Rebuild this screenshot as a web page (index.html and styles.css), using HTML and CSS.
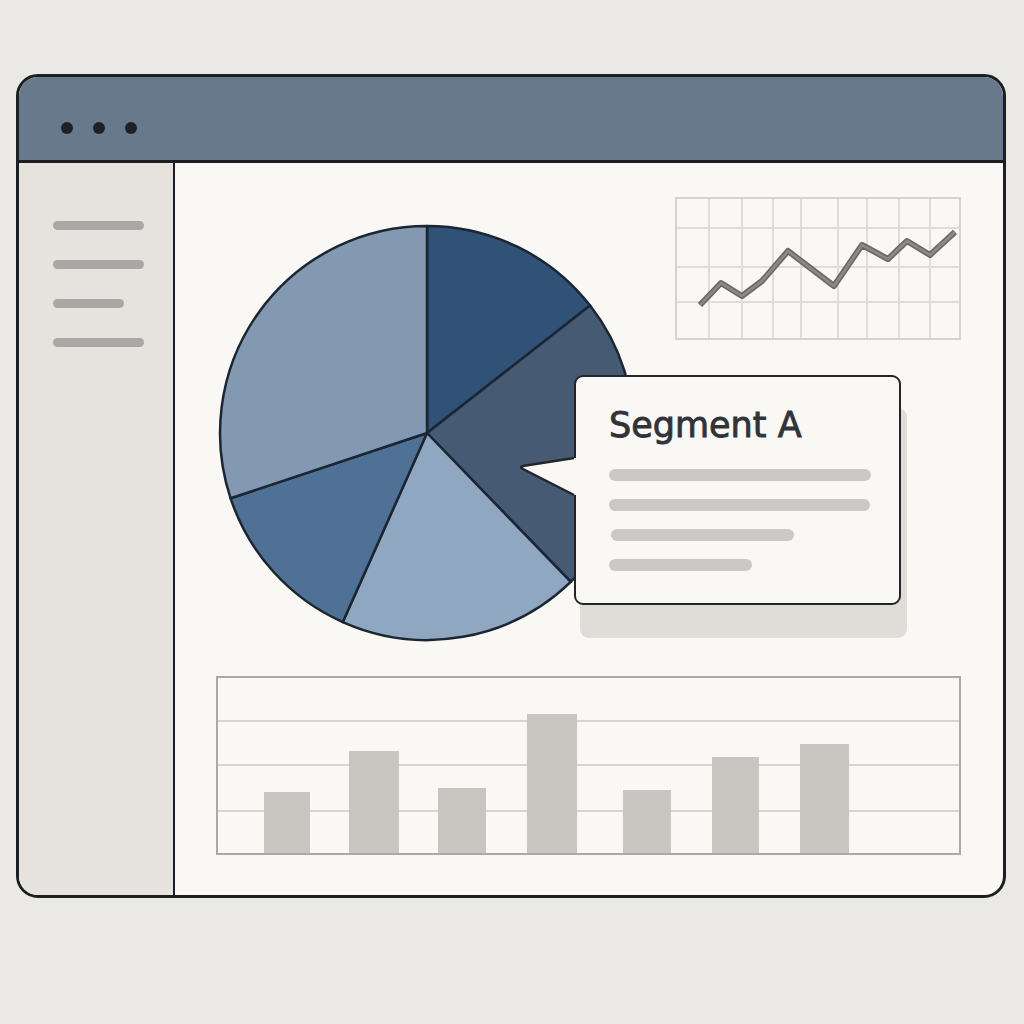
FILE: index.html
```html
<!DOCTYPE html>
<html lang="en">
<head>
  <meta charset="UTF-8" />
  <title>Dashboard</title>
  <link rel="stylesheet" href="styles.css">
</head>
<body>

  <div class="window">
    <div class="titlebar">
      <span class="dot"></span>
      <span class="dot"></span>
      <span class="dot"></span>
    </div>

    <div class="window-body">
      <aside class="sidebar">
        <div class="side-line"></div>
        <div class="side-line"></div>
        <div class="side-line short"></div>
        <div class="side-line"></div>
      </aside>

      <main class="main">
        <div class="top-row">
          <svg class="pie" width="424" height="424" viewBox="0 0 424 424">
            <g stroke="#1b2633" stroke-width="2.5" stroke-linejoin="round">
              <path d="M212 212 L212 5 A207 207 0 0 1 375.1 84.6 Z" fill="#2f5276" />
              <path d="M212 212 L375.1 84.6 A207 207 0 0 1 355.8 360.9 Z" fill="#475a74" />
              <path d="M212 212 L355.8 360.9 A207 207 0 0 1 127.8 401.1 Z" fill="#8fa7c0" />
              <path d="M212 212 L127.8 401.1 A207 207 0 0 1 15.6 277.3 Z" fill="#4f7196" />
              <path d="M212 212 L15.6 277.3 A207 207 0 0 1 212 5 Z" fill="#8399b2" />
            </g>
          </svg>

          <svg class="line-chart" width="286" height="144" viewBox="0 0 286 144">
            <g stroke="#e0ddd8" stroke-width="2">
              <line x1="2" y1="31" x2="284" y2="31" />
              <line x1="2" y1="70" x2="284" y2="70" />
              <line x1="2" y1="105" x2="284" y2="105" />
              <line x1="34" y1="2" x2="34" y2="142" />
              <line x1="67" y1="2" x2="67" y2="142" />
              <line x1="98" y1="2" x2="98" y2="142" />
              <line x1="126" y1="2" x2="126" y2="142" />
              <line x1="163" y1="2" x2="163" y2="142" />
              <line x1="192" y1="2" x2="192" y2="142" />
              <line x1="224" y1="2" x2="224" y2="142" />
              <line x1="255" y1="2" x2="255" y2="142" />
            </g>
            <rect x="1" y="1" width="284" height="141" fill="none" stroke="#d6d3ce" stroke-width="2" />
            <polyline points="25,108 46,86 67,99 87,84 113,54 159,89 187,48 213,62 232,44 255,58 280,35"
              fill="none" stroke="#6c6b69" stroke-width="6" stroke-linejoin="round" />
            <polyline points="25,108 46,86 67,99 87,84 113,54 159,89 187,48 213,62 232,44 255,58 280,35"
              fill="none" stroke="#8c8b88" stroke-width="2.5" stroke-linejoin="round" />
          </svg>
        </div>

        <svg class="bar-chart" width="745" height="179" viewBox="0 0 745 179">
          <g stroke="#d9d6d1" stroke-width="2">
            <line x1="2" y1="45" x2="743" y2="45" />
            <line x1="2" y1="89" x2="743" y2="89" />
            <line x1="2" y1="135" x2="743" y2="135" />
          </g>
          <g fill="#c8c6c1">
            <rect x="48" y="116" width="46" height="62" />
            <rect x="133" y="75" width="50" height="103" />
            <rect x="222" y="112" width="48" height="66" />
            <rect x="311" y="38" width="50" height="140" />
            <rect x="407" y="114" width="48" height="64" />
            <rect x="496" y="81" width="47" height="97" />
            <rect x="584" y="68" width="49" height="110" />
          </g>
          <rect x="1" y="1" width="743" height="177" fill="none" stroke="#aba9a5" stroke-width="2" />
        </svg>

        <div class="tooltip">
          <svg class="tooltip-arrow" width="64" height="44" viewBox="0 0 64 44">
            <path d="M55 3 L3 11 L3 13 L55 40 L63 40 L63 3 Z" fill="#f9f8f4" />
            <path d="M56 3 L5 11 Q1 12 5 14 L56 40" fill="none" stroke="#22262b" stroke-width="2.5" stroke-linejoin="round" />
          </svg>
          <div class="tooltip-title">Segment A</div>
          <div class="tooltip-lines">
            <div class="tip-line w1"></div>
            <div class="tip-line w2"></div>
            <div class="tip-line w3"></div>
            <div class="tip-line w4"></div>
          </div>
        </div>
      </main>
    </div>
  </div>

</body>
</html>
```

FILE: styles.css
```css
body {
  font-family: "DejaVu Sans", sans-serif;
  background-color: #ebe9e5;
  margin: 0;
  padding: 74px 18px 0 16px;
}


.window {
  width: 990px;
  height: 824px;
  box-sizing: border-box;
  border: 3px solid #1b1e22;
  border-radius: 22px;
  overflow: hidden;
  display: flex;
  flex-direction: column;
  background-color: #faf8f4;
}

.titlebar {
  height: 83px;
  background-color: #67798b;
  border-bottom: 3px solid #1b1e22;
  display: flex;
  align-items: flex-start;
  gap: 20px;
  padding-left: 42px;
}

.dot {
  width: 12px;
  height: 12px;
  margin-top: 45px;
  border-radius: 50%;
  background-color: #1c2127;
}


.window-body {
  flex: 1;
  display: flex;
}

.sidebar {
  width: 157px;
  background-color: #e6e3de;
  border-right: 2px solid #1b1e22;
  display: flex;
  flex-direction: column;
  gap: 30px;
  padding: 58px 0 0 34px;
  box-sizing: border-box;
}

.side-line {
  width: 91px;
  height: 9px;
  border-radius: 5px;
  background-color: #a9a8a4;
}

.side-line.short {
  width: 71px;
}


.main {
  flex: 1;
  position: relative;
  padding: 34px 42px 0 40px;
}

.top-row {
  display: flex;
  justify-content: space-between;
  align-items: flex-start;
}

.pie {
  display: block;
  margin-top: 24px;
}

.line-chart {
  display: block;
}

.bar-chart {
  display: block;
  margin-top: 31px;
  margin-left: 1px;
}


.tooltip {
  position: absolute;
  left: 399px;
  top: 212px;
  width: 327px;
  height: 230px;
  box-sizing: border-box;
  border: 2.5px solid #22262b;
  border-radius: 9px;
  background-color: #f9f8f4;
  box-shadow: 6px 33px 0 #dfddd8;
  padding: 31px 0 0 33px;
  z-index: 2;
}

.tooltip-arrow {
  position: absolute;
  left: -58px;
  top: 78px;
}

.tooltip-title {
  font-size: 35px;
  line-height: 35px;
  color: #303338;
  -webkit-text-stroke: 0.9px #303338;
}

.tooltip-lines {
  margin-top: 26px;
  display: flex;
  flex-direction: column;
  gap: 18px;
}

.tip-line {
  height: 12px;
  border-radius: 6px;
  background-color: #cbc9c5;
}

.tip-line.w1 { width: 262px; }
.tip-line.w2 { width: 261px; }
.tip-line.w3 { width: 183px; margin-left: 2px; }
.tip-line.w4 { width: 143px; }
```
